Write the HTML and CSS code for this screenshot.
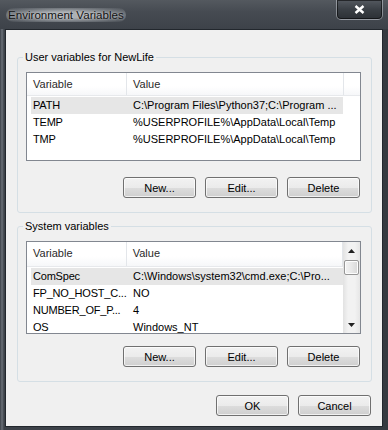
FILE: index.html
```html
<!DOCTYPE html>
<html lang="en">

<head>
    <meta charset="UTF-8">
    <meta name="viewport" content="width=device-width, initial-scale=1.0">
    <title>Environment Variables</title>
    <link rel="stylesheet" href="styles.css">
</head>

<body>
    <div class="window">
        <div class="titlebar">
            <span class="title">Environment Variables</span>
            <button class="close-btn" aria-label="Close">
                <svg width="11" height="9" viewBox="0 0 11 9">
                    <path d="M1.5 1 L9.5 8 M9.5 1 L1.5 8" stroke="#fff" stroke-width="2.4" fill="none" />
                </svg>
            </button>
        </div>

        <div class="client">
            <fieldset class="group">
                <legend>User variables for NewLife</legend>
                <div class="list list-user">
                    <div class="list-main">
                        <div class="list-head">
                            <div class="head-col col-name">Variable</div>
                            <div class="head-col col-value">Value</div>
                        </div>
                        <div class="rows">
                            <div class="row selected"><span class="cell cell-name">PATH</span><span class="cell cell-value">C:\Program Files\Python37;C:\Program ...</span></div>
                            <div class="row"><span class="cell cell-name">TEMP</span><span class="cell cell-value">%USERPROFILE%\AppData\Local\Temp</span></div>
                            <div class="row"><span class="cell cell-name">TMP</span><span class="cell cell-value">%USERPROFILE%\AppData\Local\Temp</span></div>
                        </div>
                    </div>
                </div>
                <div class="buttons">
                    <button class="btn">New...</button>
                    <button class="btn">Edit...</button>
                    <button class="btn">Delete</button>
                </div>
            </fieldset>

            <fieldset class="group group-system">
                <legend>System variables</legend>
                <div class="list list-system">
                    <div class="list-main">
                        <div class="list-head">
                            <div class="head-col col-name">Variable</div>
                            <div class="head-col col-value">Value</div>
                        </div>
                        <div class="rows">
                            <div class="row selected"><span class="cell cell-name">ComSpec</span><span class="cell cell-value">C:\Windows\system32\cmd.exe;C:\Pro...</span></div>
                            <div class="row"><span class="cell cell-name">FP_NO_HOST_C...</span><span class="cell cell-value">NO</span></div>
                            <div class="row"><span class="cell cell-name">NUMBER_OF_P...</span><span class="cell cell-value">4</span></div>
                            <div class="row"><span class="cell cell-name">OS</span><span class="cell cell-value">Windows_NT</span></div>
                        </div>
                    </div>
                    <div class="scrollbar">
                        <div class="scroll-arrow">
                            <svg width="7" height="4" viewBox="0 0 7 4"><polygon points="3.5,0 7,4 0,4" fill="#222" /></svg>
                        </div>
                        <div class="scroll-thumb"></div>
                        <div class="scroll-track"></div>
                        <div class="scroll-arrow">
                            <svg width="7" height="4" viewBox="0 0 7 4"><polygon points="0,0 7,0 3.5,4" fill="#222" /></svg>
                        </div>
                    </div>
                </div>
                <div class="buttons">
                    <button class="btn">New...</button>
                    <button class="btn">Edit...</button>
                    <button class="btn">Delete</button>
                </div>
            </fieldset>

            <div class="footer">
                <button class="btn">OK</button>
                <button class="btn">Cancel</button>
            </div>
        </div>
    </div>
</body>

</html>
```

FILE: styles.css
```css
body {
    margin: 0;
    padding: 0;
    font-family: "Liberation Sans", Arial, sans-serif;
    font-size: 11px;
    background-color: #2b3036;
}

.window {
    width: 388px;
    height: 430px;
    box-sizing: border-box;
    padding: 0 5px 3px 5px;
    display: flex;
    flex-direction: column;
    background: linear-gradient(to right, #3a3f46 0, #6a7078 2px, #3c4148 4px, #3f444b 60%, #353a40 100%);
}

.titlebar {
    height: 29px;
    flex-shrink: 0;
    display: flex;
    align-items: flex-start;
    justify-content: space-between;
    background: linear-gradient(to bottom, #54595f 0, #464b52 40%, #3d4249 100%);
    margin: 0 -5px;
    padding: 0 5px;
}

.title {
    margin-top: 8px;
    margin-left: 1px;
    padding: 0 2px;
    font-size: 11.6px;
    line-height: 14px;
    color: #111;
    border-radius: 8px;
    background: radial-gradient(ellipse at center, rgba(190, 194, 198, 0.85) 30%, rgba(150, 155, 160, 0.5) 70%, rgba(120, 125, 130, 0) 100%);
    text-shadow: 0 0 2px rgba(255, 255, 255, 0.5);
}

.close-btn {
    width: 47px;
    height: 21px;
    margin-top: -1px;
    padding: 0;
    display: flex;
    align-items: center;
    justify-content: center;
    border: 1px solid rgba(205, 210, 216, 0.55);
    border-radius: 0 0 5px 5px;
    background: linear-gradient(to bottom, #545960, #3a3f45 50%, #2c3035);
    box-shadow: inset 0 0 0 1px rgba(0, 0, 0, 0.55);
}

.client {
    flex: 1;
    background-color: #f0f0f0;
    border: 1px solid #22272d;
    padding: 20px 10px 0 11px;
    display: flex;
    flex-direction: column;
}

.group {
    margin: 0;
    padding: 8px 10px 14px 8px;
    border: 1px solid #d5dfe5;
    border-radius: 3px;
    min-width: 0;
}

.group-system {
    margin-top: 6px;
}

legend {
    padding: 0 2px;
    margin-left: -3px;
    line-height: 14px;
    color: #000;
}

.list {
    box-sizing: border-box;
    height: 89px;
    border: 1px solid #828790;
    background: #fff;
    display: flex;
    overflow: hidden;
}

.list-system {
    height: 93px;
}

.list-main {
    flex: 1;
    min-width: 0;
}

.list-head {
    height: 23px;
    display: flex;
    border-bottom: 1px solid #e7e9ec;
    box-sizing: border-box;
    background: linear-gradient(to bottom, #fff 0, #fff 60%, #f6f7f9 100%);
}

.list-system .list-head {
    height: 25px;
}

.head-col {
    box-sizing: border-box;
    padding-left: 6px;
    line-height: 22px;
    color: #2a2a2a;
    border-right: 1px solid #e3e6ea;
}

.col-name {
    width: 100px;
}

.col-value {
    width: 217px;
}

.rows {
    padding-top: 1px;
}

.row {
    display: flex;
    width: 312px;
    height: 17px;
    margin-left: 4px;
    line-height: 17px;
    color: #000;
}

.row.selected {
    background: #e6e6e6;
}

.cell {
    white-space: nowrap;
    box-sizing: border-box;
}

.cell-name {
    width: 96px;
    padding-left: 2px;
    letter-spacing: -0.2px;
}

.cell-value {
    width: 216px;
    padding-left: 6px;
    overflow: hidden;
}

.scrollbar {
    width: 17px;
    flex-shrink: 0;
    display: flex;
    flex-direction: column;
    background: linear-gradient(to right, #e2e2e2, #f2f2f2 30%, #f2f2f2 70%, #e6e6e6);
}

.scroll-arrow {
    height: 17px;
    display: flex;
    align-items: center;
    justify-content: center;
}

.scroll-thumb {
    height: 15px;
    margin: 1px 1px 0 1px;
    border: 1px solid #979797;
    border-radius: 2px;
    box-sizing: border-box;
    background: linear-gradient(to right, #f3f3f3, #e8e8e8 50%, #d8d8d8);
    box-shadow: inset 0 0 0 1px #fdfdfd;
}

.scroll-track {
    flex: 1;
}

.buttons {
    display: flex;
    justify-content: flex-end;
    gap: 9px;
    margin-top: 16px;
    padding-right: 1px;
}

.group-system .buttons {
    margin-top: 12px;
}

.btn {
    width: 73px;
    height: 21px;
    box-sizing: border-box;
    padding: 0;
    border: 1px solid #707070;
    border-radius: 3px;
    background: linear-gradient(to bottom, #f2f2f2 0%, #ebebeb 50%, #dddddd 51%, #cfcfcf 100%);
    box-shadow: inset 0 0 0 1px rgba(255, 255, 255, 0.7);
    font-family: inherit;
    font-size: 11px;
    color: #000;
    cursor: pointer;
}

.footer {
    display: flex;
    justify-content: flex-end;
    gap: 9px;
    margin-top: 13px;
    padding-right: 1px;
}
```
